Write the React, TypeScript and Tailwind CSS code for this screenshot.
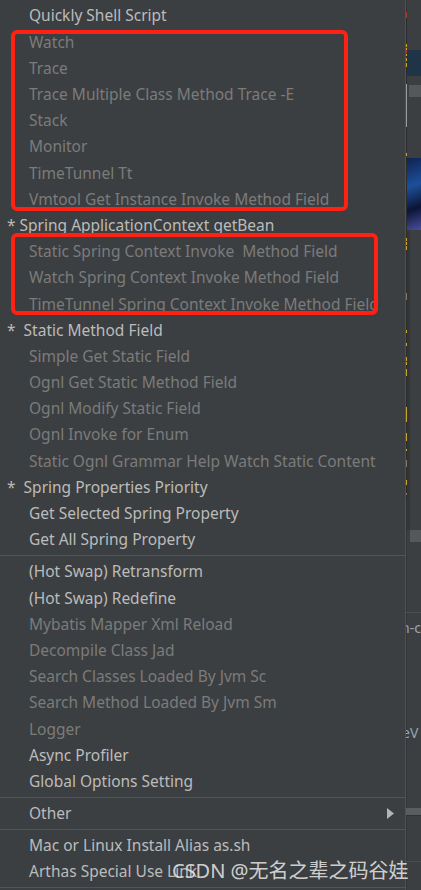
import React from 'react';

type Item =
  | { type: 'item'; label: string; disabled?: boolean; submenu?: boolean }
  | { type: 'header'; label: string }
  | { type: 'sep' };

const items: Item[] = [
  { type: 'item', label: 'Quickly Shell Script' },
  { type: 'item', label: 'Watch', disabled: true },
  { type: 'item', label: 'Trace', disabled: true },
  { type: 'item', label: 'Trace Multiple Class Method Trace -E', disabled: true },
  { type: 'item', label: 'Stack', disabled: true },
  { type: 'item', label: 'Monitor', disabled: true },
  { type: 'item', label: 'TimeTunnel Tt', disabled: true },
  { type: 'item', label: 'Vmtool Get Instance Invoke Method Field', disabled: true },
  { type: 'header', label: '* Spring ApplicationContext getBean' },
  { type: 'item', label: 'Static Spring Context Invoke  Method Field', disabled: true },
  { type: 'item', label: 'Watch Spring Context Invoke Method Field', disabled: true },
  { type: 'item', label: 'TimeTunnel Spring Context Invoke Method Field', disabled: true },
  { type: 'header', label: '*  Static Method Field' },
  { type: 'item', label: 'Simple Get Static Field', disabled: true },
  { type: 'item', label: 'Ognl Get Static Method Field', disabled: true },
  { type: 'item', label: 'Ognl Modify Static Field', disabled: true },
  { type: 'item', label: 'Ognl Invoke for Enum', disabled: true },
  { type: 'item', label: 'Static Ognl Grammar Help Watch Static Content', disabled: true },
  { type: 'header', label: '*  Spring Properties Priority' },
  { type: 'item', label: 'Get Selected Spring Property' },
  { type: 'item', label: 'Get All Spring Property' },
  { type: 'sep' },
  { type: 'item', label: '(Hot Swap) Retransform' },
  { type: 'item', label: '(Hot Swap) Redefine' },
  { type: 'item', label: 'Mybatis Mapper Xml Reload', disabled: true },
  { type: 'item', label: 'Decompile Class Jad', disabled: true },
  { type: 'item', label: 'Search Classes Loaded By Jvm Sc', disabled: true },
  { type: 'item', label: 'Search Method Loaded By Jvm Sm', disabled: true },
  { type: 'item', label: 'Logger', disabled: true },
  { type: 'item', label: 'Async Profiler' },
  { type: 'item', label: 'Global Options Setting' },
  { type: 'sep' },
  { type: 'item', label: 'Other', submenu: true },
  { type: 'sep' },
  { type: 'item', label: 'Mac or Linux Install Alias as.sh' },
  { type: 'item', label: 'Arthas Special Use Link' },
  { type: 'sep' },
];

// error stripe markers on the editor scrollbar: [top, height, color]
const markers: [number, number, string][] = [
  [32, 3, '#c9a227'], [36, 2, '#c9a227'], [38, 3, '#b8352c'], [42, 2, '#c9a227'],
  [46, 3, '#c9a227'], [51, 4, '#c9a227'], [141, 3, '#c9a227'],
  [226, 3, '#c9a227'], [230, 3, '#c9a227'], [234, 4, '#c9a227'],
  [281, 7, '#7d7662'], [318, 3, '#c9a227'], [331, 3, '#c9a227'],
  [345, 4, '#c9a227'], [350, 3, '#c9a227'], [357, 7, '#c9a227'],
  [395, 15, '#c9a227'], [421, 8, '#c9a227'], [437, 2, '#c9a227'],
  [448, 7, '#7d7662'], [468, 5, '#c9a227'], [481, 2, '#7d7662'],
];

const MenuRow: React.FC<{ item: Item }> = ({ item }) => {
  if (item.type === 'sep') {
    return (
      <div className="h-[6px] pt-[2px]">
        <div className="h-px bg-[#515456]" />
      </div>
    );
  }
  if (item.type === 'header') {
    return (
      <div className="h-[26.2px] flex items-center pl-[7px] text-[#bbbbbb] whitespace-pre">
        {item.label}
      </div>
    );
  }
  return (
    <div
      className={`h-[26.2px] flex items-center pl-[29px] pr-[11px] whitespace-pre ${
        item.disabled ? 'text-[#7b7b7b]' : 'text-[#bbbbbb]'
      }`}
    >
      <span className="flex-1">{item.label}</span>
      {item.submenu && (
        <svg width="7" height="11" viewBox="0 0 7 11">
          <polygon points="0,0 7,5.5 0,11" fill="#b4b4b4" />
        </svg>
      )}
    </div>
  );
};

export default function App() {
  return (
    <div className="w-[421px] h-[890px] overflow-hidden flex bg-[#3c3f41] font-['Noto_Sans',sans-serif] text-[15.5px]">
      {/* popup menu */}
      <div className="relative w-[406px] h-full shrink-0 border-r border-[#4f5254] pt-[3px]">
        {items.map((item, i) => (
          <MenuRow key={i} item={item} />
        ))}

        {/* annotation boxes */}
        <div className="absolute left-[11px] top-[30px] w-[337px] h-[181px] border-[4px] border-[#ff2214] rounded-[6px]" />
        <div className="absolute left-[11px] top-[233px] w-[367px] h-[82px] border-[4px] border-[#ff2214] rounded-[6px]" />

        {/* watermark */}
        <div className="absolute left-[172px] top-[858px] text-[20px] leading-[26px] text-[#e2e2e2]/90 font-['Noto_Sans','Noto_Sans_CJK_SC',sans-serif] whitespace-nowrap">
          CSDN @无名之辈之码谷娃
        </div>
      </div>

      {/* editor edge behind the popup */}
      <div className="flex h-full flex-1 overflow-hidden">
        <div className="w-px h-full bg-[#323436]" />
        <div className="flex flex-col w-[6px] h-full">
          <div className="h-[12px]" />
          <div className="relative h-[488px] bg-[#2b2b2b]">
            <div className="h-[6px] rounded-full bg-[#b8352c]" />
            <div className="absolute inset-x-0 top-[72px] h-[43px] bg-[#9a9a9a]" />
            {markers.map(([t, h, c], i) => (
              <div key={i} className="absolute inset-x-0" style={{ top: t, height: h, background: c }} />
            ))}
          </div>
        </div>
        <div className="flex flex-col flex-1 h-full">
          <div className="h-[50px]" />
          <div className="h-[26px] bg-[#1f3447]" />
          <div className="h-[9px]" />
          <div className="h-[12px] ml-[2px] bg-[#55585a]" />
          <div className="h-[61px]" />
          <div className="h-[72px] -ml-[6px] bg-[linear-gradient(160deg,#0e1f4a,#1d4f9a_40%,#0b1536_70%,#4a4e9c)]" />
          <div className="h-[300px] flex">
            <div className="w-[3px] bg-[#333537]" />
          </div>
          <div className="h-[12px] ml-[3px] bg-[#55585a]" />
          <div className="h-[70px]" />
          <div className="h-px -ml-[6px] bg-[#4a4d4f]" />
          <div className="h-[6px]" />
          <div className="h-[18px] -ml-[6px] text-[14px] leading-[18px] text-[#9aa4b5] whitespace-nowrap">n-c</div>
          <div className="h-[87px]" />
          <div className="h-[18px] -ml-[5px] text-[14px] leading-[18px] text-[#9aa4b5] whitespace-nowrap">eV</div>
          <div className="h-[66px]" />
          <div className="h-[7px] -ml-[6px] bg-[#5a5d5f]" />
          <div className="h-px -ml-[6px] bg-[#2f3133]" />
          <div className="h-[45px]" />
          <div className="h-px -ml-[6px] bg-[#4a4d4f]" />
        </div>
      </div>
    </div>
  );
}
